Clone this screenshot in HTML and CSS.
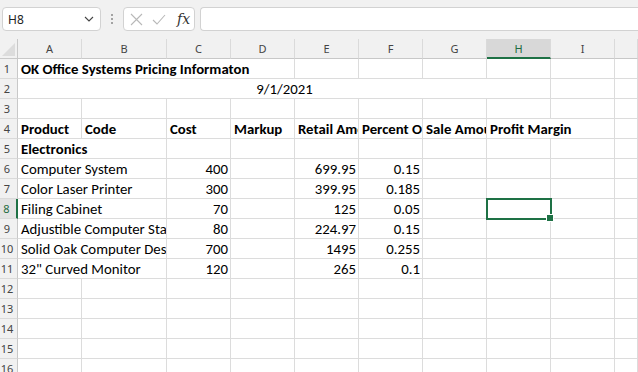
FILE: index.html
```html
<!DOCTYPE html>
<html lang="en">
<head>
    <meta charset="UTF-8">
    <meta name="viewport" content="width=device-width, initial-scale=1.0">
    <title>Pricing Information</title>
    <link rel="stylesheet" href="styles.css">
</head>
<body>
    <div class="toolbar">
        <div class="namebox">
            <span>H8</span>
            <svg width="10" height="6" viewBox="0 0 10 6"><path d="M1 1 L5 5 L9 1" fill="none" stroke="#444" stroke-width="1.1"/></svg>
        </div>
        <div class="dots">
            <svg width="4" height="12" viewBox="0 0 4 12"><circle cx="2" cy="2" r="1" fill="#888"/><circle cx="2" cy="6" r="1" fill="#888"/><circle cx="2" cy="10" r="1" fill="#888"/></svg>
        </div>
        <div class="funcbox">
            <svg width="13" height="13" viewBox="0 0 13 13"><path d="M1 1 L12 12 M12 1 L1 12" stroke="#b8b8b8" stroke-width="1.1"/></svg>
            <svg width="14" height="11" viewBox="0 0 14 11"><path d="M1 6 L5 10 L13 1" fill="none" stroke="#b8b8b8" stroke-width="1.1"/></svg>
            <span class="fx">fx</span>
        </div>
        <div class="formula"></div>
    </div>

    <div class="sheet">
        <div class="corner"><div class="tri"></div></div>
        <div class="ch">A</div>
        <div class="ch">B</div>
        <div class="ch">C</div>
        <div class="ch">D</div>
        <div class="ch">E</div>
        <div class="ch">F</div>
        <div class="ch">G</div>
        <div class="ch active">H</div>
        <div class="ch">I</div>
        <div class="ch"></div>

        <div class="rh">1</div>
        <div class="c b s4">OK Office Systems Pricing Informaton</div>
        <div class="c"></div><div class="c"></div><div class="c"></div><div class="c"></div><div class="c"></div><div class="c"></div>

        <div class="rh">2</div>
        <div class="c s8 mid">9/1/2021</div>
        <div class="c"></div><div class="c"></div>

        <div class="rh">3</div>
        <div class="c"></div><div class="c"></div><div class="c"></div><div class="c"></div><div class="c"></div>
        <div class="c"></div><div class="c"></div><div class="c"></div><div class="c"></div><div class="c"></div>

        <div class="rh">4</div>
        <div class="c b">Product</div>
        <div class="c b">Code</div>
        <div class="c b">Cost</div>
        <div class="c b">Markup</div>
        <div class="c b">Retail Amount</div>
        <div class="c b">Percent Off</div>
        <div class="c b">Sale Amount</div>
        <div class="c b s2">Profit Margin</div>
        <div class="c"></div>

        <div class="rh">5</div>
        <div class="c b s2">Electronics</div>
        <div class="c"></div><div class="c"></div><div class="c"></div><div class="c"></div>
        <div class="c"></div><div class="c"></div><div class="c"></div><div class="c"></div>

        <div class="rh">6</div>
        <div class="c s2">Computer System</div>
        <div class="c r">400</div><div class="c"></div>
        <div class="c r">699.95</div><div class="c r">0.15</div>
        <div class="c"></div><div class="c"></div><div class="c"></div><div class="c"></div>

        <div class="rh">7</div>
        <div class="c s2">Color Laser Printer</div>
        <div class="c r">300</div><div class="c"></div>
        <div class="c r">399.95</div><div class="c r">0.185</div>
        <div class="c"></div><div class="c"></div><div class="c"></div><div class="c"></div>

        <div class="rh active">8</div>
        <div class="c s2">Filing Cabinet</div>
        <div class="c r">70</div><div class="c"></div>
        <div class="c r">125</div><div class="c r">0.05</div>
        <div class="c"></div><div class="c sel"></div><div class="c"></div><div class="c"></div>

        <div class="rh">9</div>
        <div class="c s2">Adjustible Computer Stand</div>
        <div class="c r">80</div><div class="c"></div>
        <div class="c r">224.97</div><div class="c r">0.15</div>
        <div class="c"></div><div class="c"></div><div class="c"></div><div class="c"></div>

        <div class="rh">10</div>
        <div class="c s2">Solid Oak Computer Desk</div>
        <div class="c r">700</div><div class="c"></div>
        <div class="c r">1495</div><div class="c r">0.255</div>
        <div class="c"></div><div class="c"></div><div class="c"></div><div class="c"></div>

        <div class="rh">11</div>
        <div class="c s2">32" Curved Monitor</div>
        <div class="c r">120</div><div class="c"></div>
        <div class="c r">265</div><div class="c r">0.1</div>
        <div class="c"></div><div class="c"></div><div class="c"></div><div class="c"></div>

        <div class="rh">12</div>
        <div class="c"></div><div class="c"></div><div class="c"></div><div class="c"></div><div class="c"></div>
        <div class="c"></div><div class="c"></div><div class="c"></div><div class="c"></div><div class="c"></div>

        <div class="rh">13</div>
        <div class="c"></div><div class="c"></div><div class="c"></div><div class="c"></div><div class="c"></div>
        <div class="c"></div><div class="c"></div><div class="c"></div><div class="c"></div><div class="c"></div>

        <div class="rh">14</div>
        <div class="c"></div><div class="c"></div><div class="c"></div><div class="c"></div><div class="c"></div>
        <div class="c"></div><div class="c"></div><div class="c"></div><div class="c"></div><div class="c"></div>

        <div class="rh">15</div>
        <div class="c"></div><div class="c"></div><div class="c"></div><div class="c"></div><div class="c"></div>
        <div class="c"></div><div class="c"></div><div class="c"></div><div class="c"></div><div class="c"></div>

        <div class="rh">16</div>
        <div class="c"></div><div class="c"></div><div class="c"></div><div class="c"></div><div class="c"></div>
        <div class="c"></div><div class="c"></div><div class="c"></div><div class="c"></div><div class="c"></div>
    </div>
</body>
</html>
```

FILE: styles.css
```css
*{
    margin: 0;
    padding: 0;
    box-sizing: border-box;
}

body{
    width: 638px;
    height: 372px;
    overflow: hidden;
    background-color: #f1f1f1;
    font-family: "Segoe UI", "Noto Sans", sans-serif;
}

/* formula bar */

.toolbar{
    height: 39px;
    display: flex;
    align-items: flex-start;
    padding-top: 7px;
    padding-left: 2px;
}

.namebox{
    width: 99px;
    height: 24px;
    background-color: white;
    border: 1px solid #d2d2d2;
    border-radius: 4px;
    display: flex;
    align-items: center;
    justify-content: space-between;
    padding: 0 6px 0 5px;
    font-size: 12px;
    color: #222;
}

.dots{
    width: 22px;
    height: 24px;
    display: flex;
    align-items: center;
    justify-content: center;
}

.funcbox{
    width: 72px;
    height: 24px;
    background-color: white;
    border: 1px solid #d2d2d2;
    border-radius: 4px;
    display: flex;
    align-items: center;
    gap: 9px;
    padding-left: 6px;
}

.fx{
    font-family: "DejaVu Serif", "Liberation Serif", serif;
    font-style: italic;
    font-size: 14px;
    color: #333;
    margin-left: 2px;
}

.formula{
    flex: 1;
    height: 24px;
    margin-left: 5px;
    background-color: white;
    border: 1px solid #d2d2d2;
    border-right: none;
    border-radius: 4px 0 0 4px;
}

/* grid */

.sheet{
    display: grid;
    grid-template-columns: 18px 64px 85px repeat(7, 64px) 1fr;
    grid-auto-rows: 20px;
    width: 638px;
    background-color: white;
    font-family: Carlito, Lato, sans-serif;
    font-size: 14.8px;
    color: #000;
}

.corner{
    background-color: #f1f1f1;
    border-right: 1px solid #c8c8c8;
    border-bottom: 1px solid #c8c8c8;
    position: relative;
}

.tri{
    position: absolute;
    right: 2px;
    bottom: 2px;
    width: 0;
    height: 0;
    border-left: 13px solid transparent;
    border-bottom: 13px solid #dcdcdc;
}

.ch{
    background-color: #f1f1f1;
    border-right: 1px solid #dadada;
    border-bottom: 1px solid #c8c8c8;
    font-family: "Segoe UI", "Noto Sans", sans-serif;
    font-size: 11px;
    color: #444;
    text-align: center;
    line-height: 19px;
}

.ch.active{
    background-color: #d8d8d8;
    color: #1d6b41;
    border-bottom: 2px solid #1e7145;
}

.rh{
    background-color: #f1f1f1;
    border-right: 1px solid #c8c8c8;
    border-bottom: 1px solid #dadada;
    font-family: "Segoe UI", "Noto Sans", sans-serif;
    font-size: 11px;
    color: #444;
    text-align: center;
    padding-right: 3px;
    line-height: 20px;
}

.rh.active{
    color: #1d6b41;
    background-color: #e3e3e3;
    border-right: 2px solid #1e7145;
}

.c{
    border-right: 1px solid #dcdcdc;
    border-bottom: 1px solid #dcdcdc;
    padding: 1px 2px 0 3px;
    line-height: 19px;
    white-space: nowrap;
    overflow: hidden;
}

.b{ font-weight: bold; }
.r{ text-align: right; }
.mid{ text-align: center; }

.s2{ grid-column: span 2; }
.s4{ grid-column: span 4; }
.s8{ grid-column: span 8; }

.sel{
    position: relative;
    overflow: visible;
    outline: 2px solid #1e7145;
    outline-offset: -1px;
    z-index: 1;
}

.sel::after{
    content: "";
    position: absolute;
    right: -4px;
    bottom: -4px;
    width: 6px;
    height: 6px;
    background-color: #1e7145;
    border: 1px solid white;
}
```
